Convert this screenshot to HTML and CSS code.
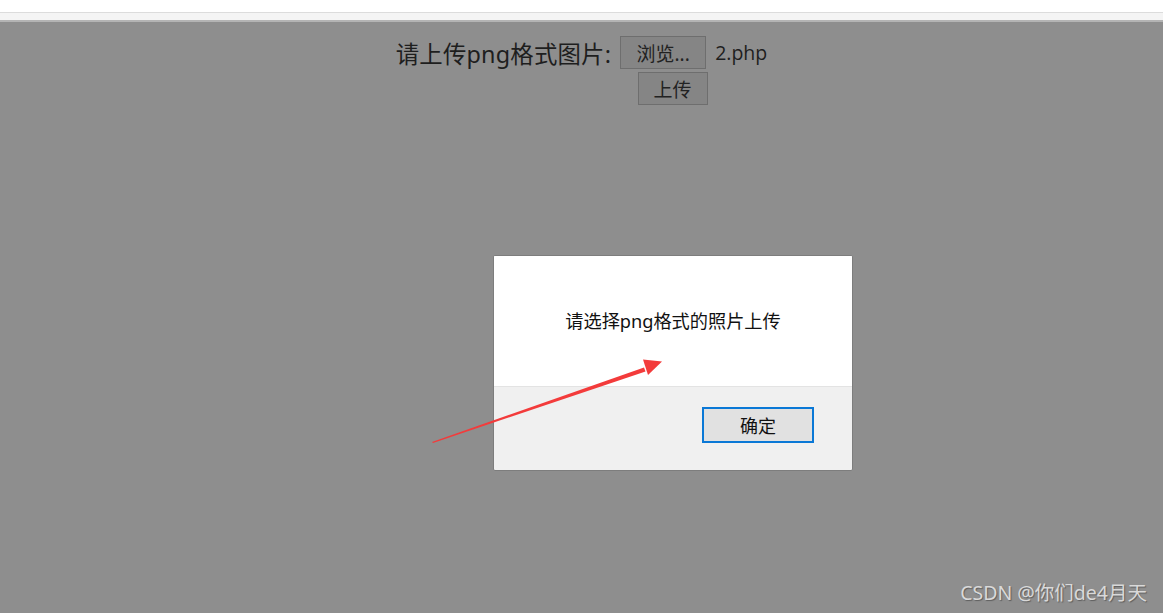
FILE: index.html
```html
<!DOCTYPE html>
<html lang="zh-CN">
<head>
<meta charset="utf-8">
<title>上传</title>
<link rel="stylesheet" href="styles.css">
</head>
<body>
<div class="topbar">
  <div class="topbar-white"></div>
  <div class="topbar-light"></div>
  <div class="topbar-edge"></div>
</div>
<main class="page">
  <form class="upload">
    <div class="row">
      <span class="label">请上传png格式图片:</span>
      <span class="btn browse">浏览...</span>
      <span class="filename">2.php</span>
    </div>
    <div class="row">
      <span class="btn submit">上传</span>
    </div>
  </form>
</main>

<div class="dialog">
  <div class="dialog-body">请选择png格式的照片上传</div>
  <div class="dialog-foot">
    <span class="ok">确定</span>
  </div>
</div>

<svg class="arrow" width="1163" height="613" viewBox="0 0 1163 613">
  <polygon points="432,442 644,367.5 645.5,371.5 433,443" fill="#f33b3b"/>
  <polygon points="643,359.5 662,361.5 648,375" fill="#f33b3b"/>
</svg>

<div class="watermark">CSDN @你们de4月天</div>
</body>
</html>
```
FILE: styles.css
```css
html, body {
  margin: 0;
  padding: 0;
}
body {
  width: 1163px;
  height: 613px;
  overflow: hidden;
  background: #8e8e8e;
  font-family: "Noto Sans", "Noto Sans CJK SC", sans-serif;
  color: #1e1e1e;
  position: relative;
}
.topbar-white {
  height: 12px;
  background: #ffffff;
  border-bottom: 1px solid #dcdcdc;
}
.topbar-light {
  height: 7px;
  background: #f4f4f4;
}
.topbar-edge {
  height: 2px;
  background: #b4b4b4;
}
.page {
  padding-top: 13px;
}
.upload {
  display: flex;
  flex-direction: column;
  align-items: center;
  gap: 2px;
}
.row {
  display: flex;
  align-items: center;
}
.label {
  font-size: 23.4px;
  letter-spacing: 0.2px;
  margin-right: 9px;
  margin-top: 1px;
}
.btn {
  box-sizing: border-box;
  height: 33px;
  display: flex;
  align-items: center;
  justify-content: center;
  background: #858585;
  border: 1px solid #6e6e6e;
  font-size: 19px;
  color: #222;
}
.browse {
  width: 86px;
}
.filename {
  font-size: 19.5px;
  margin-left: 9px;
  font-family: "Open Sans", "Noto Sans CJK SC", sans-serif;
}
.submit {
  width: 70px;
  margin-left: 182px;
}
.dialog {
  position: absolute;
  left: 493px;
  top: 255px;
  width: 358px;
  height: 214px;
  border: 1px solid #7d7d7d;
  border-radius: 2px;
  background: #f0f0f0;
  display: flex;
  flex-direction: column;
  overflow: hidden;
}
.dialog-body {
  height: 131px;
  background: #ffffff;
  border-bottom: 1px solid #e3e3e3;
  display: flex;
  align-items: center;
  justify-content: center;
  font-size: 18.2px;
  color: #111;
  padding-bottom: 2px;
  box-sizing: border-box;
}
.dialog-foot {
  flex: 1;
  display: flex;
  justify-content: flex-end;
  padding: 20px 38px 0 0;
}
.ok {
  box-sizing: border-box;
  width: 112px;
  height: 36px;
  border: 2px solid #0a78d6;
  background: #e1e1e1;
  display: flex;
  align-items: center;
  justify-content: center;
  font-size: 18px;
  color: #111;
}
.arrow {
  position: absolute;
  left: 0;
  top: 0;
  pointer-events: none;
}
.watermark {
  position: absolute;
  right: 16px;
  bottom: 7px;
  font-size: 19.5px;
  color: #d9d9d9;
  text-shadow: 1px 1px 1px #5e5e5e;
  font-family: "Noto Sans", "Noto Sans CJK SC", sans-serif;
}
```
